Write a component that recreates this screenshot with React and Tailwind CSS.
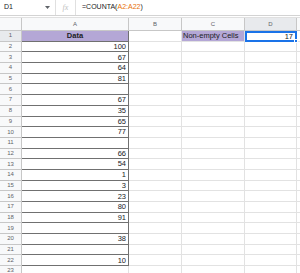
const data = [100, 67, 64, 81, null, 67, 35, 65, 77, null, 66, 54, 1, 3, 23, 80, 91, null, 38, null, 10];

const font = { fontFamily: '"Liberation Sans", Arial, sans-serif' };

function HeaderCell({ className = '', children }) {
    return (
        <div className={`flex items-center justify-center border-r border-[#c7c7c7] text-[6px] text-[#5f6368] ${className}`}>
            {children}
        </div>
    );
}

function RowNum({ n, active }) {
    return (
        <div
            className={`w-[22px] shrink-0 flex items-center justify-center border-r border-b border-[#c7c7c7] text-[6px] text-[#5f6368] ${
                active ? 'bg-[#e8eaed]' : 'bg-[#f8f9fa]'
            }`}
        >
            {n}
        </div>
    );
}

export default function App() {
    return (
        <div className="w-[300px] h-[273px] overflow-hidden bg-white text-[#202124]" style={font}>
            {/* Formula bar */}
            <div className="h-[16px] flex items-center border-b border-[#d3d3d3]">
                <div className="w-[56px] h-full flex items-center justify-between pl-[4px] pr-[5px] border-r border-[#e0e0e0]">
                    <span className="text-[7px]">D1</span>
                    <svg width="5" height="3" viewBox="0 0 5 3">
                        <path d="M0 0h5L2.5 3z" fill="#5f6368" />
                    </svg>
                </div>
                <div className="w-[20px] h-full flex items-center justify-center border-r border-[#e0e0e0]">
                    <span className="text-[8px] italic text-[#c0c0c0]" style={{ fontFamily: '"Liberation Serif", serif' }}>
                        fx
                    </span>
                </div>
                <div className="pl-[6px] text-[7px]">
                    =COUNTA(<span className="text-[#e8710a]">A2:A22</span>)
                </div>
            </div>

            {/* Column headers */}
            <div className="h-[14px] mt-[1px] flex bg-[#f8f9fa] border-b border-[#c7c7c7] border-t border-t-[#e0e0e0]">
                <HeaderCell className="w-[22px]" />
                <HeaderCell className="w-[107px]">A</HeaderCell>
                <HeaderCell className="w-[53px]">B</HeaderCell>
                <HeaderCell className="w-[63px]">C</HeaderCell>
                <HeaderCell className="w-[52px] bg-[#e8eaed]">D</HeaderCell>
                <div className="flex-1" />
            </div>

            {/* Row 1 */}
            <div className="h-[10.7px] flex">
                <RowNum n={1} active />
                <div className="w-[107px] flex items-center justify-center bg-[#b4a7d6] border-r border-b border-[#707070] text-[7.5px] font-bold">
                    Data
                </div>
                <div className="w-[53px] border-r border-b border-[#e2e2e2]" />
                <div className="w-[63px] flex items-center pl-[1px] bg-[#b4a7d6] border-r border-b border-[#e2e2e2] text-[7.5px] whitespace-nowrap">
                    Non-empty Cells
                </div>
                <div className="relative w-[52px] flex items-center justify-end pr-[2px] border-2 border-[#1a73e8] text-[7.5px]">
                    17
                    <div className="absolute -right-[3px] -bottom-[3px] w-[4px] h-[4px] bg-[#1a73e8] border border-white" />
                </div>
                <div className="flex-1 border-b border-[#e2e2e2]" />
            </div>

            {/* Data rows */}
            {[...data, undefined].map((v, i) => {
                const n = i + 2;
                const inA = n <= 22;
                return (
                    <div key={n} className="h-[10.7px] flex">
                        <RowNum n={n} />
                        <div
                            className={`w-[107px] flex items-center justify-end pr-[2px] text-[7.5px] border-b ${
                                inA ? 'border-r border-[#707070]' : 'border-r border-[#e2e2e2]'
                            }`}
                        >
                            {v}
                        </div>
                        <div className="w-[53px] border-r border-b border-[#e2e2e2]" />
                        <div className="w-[63px] border-r border-b border-[#e2e2e2]" />
                        <div className="w-[52px] border-r border-b border-[#e2e2e2]" />
                        <div className="flex-1 border-b border-[#e2e2e2]" />
                    </div>
                );
            })}
        </div>
    );
}
